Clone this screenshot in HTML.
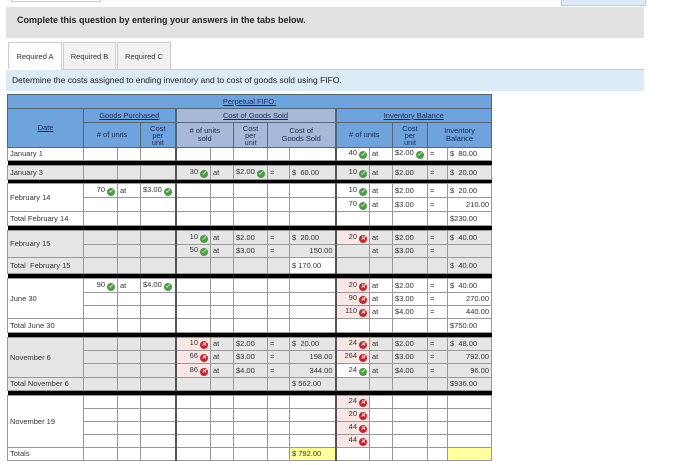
<!DOCTYPE html>
<html><head><meta charset="utf-8"><style>
body{margin:0;width:700px;height:465px;background:#fff;font-family:"Liberation Sans",Arial,sans-serif;position:relative;overflow:hidden}
.topl{position:absolute;left:11px;top:0;width:88px;height:1px;border:1px solid #ccc;border-top:0}
.topr{position:absolute;left:561px;top:0;width:83px;height:5px;background:#dbe9f7;border:1px solid #bcd;border-top:0}
.banner{position:absolute;left:6px;top:7px;width:638px;height:31px;background:#e2e2e2}
.banner b{position:absolute;left:11px;top:8px;font-size:9px;color:#222}
.tab{position:absolute;top:42px;height:27px;border:1px solid #ccc;border-bottom:0;background:#f2f2f2;font-size:7.5px;color:#333;text-align:center;line-height:27px;box-sizing:border-box}
.tab.a{background:#fff}
.tline{position:absolute;left:61px;top:69px;width:583px;height:1px;background:#ccc}
.instr{position:absolute;left:6px;top:70px;width:638px;height:21px;background:#dcebf8;font-size:8.5px;line-height:21px;color:#222}
.instr span{margin-left:6px}
table{position:absolute;left:7px;top:94px;border-collapse:collapse;table-layout:fixed;font-size:7.5px;color:#333}
td{border:1px solid #999;padding:0 2px;overflow:hidden;white-space:nowrap;line-height:8px}
.h td{background:#6fa3de;text-align:center;color:#1a2a4a;border-color:#567}
.h td.c{background:#a7b8d9}
.h u{color:#1a2a5a}
.g td{background:#e6e6e6}
.bar td{background:#000;border:0;padding:0;height:4px}
.r{text-align:right}
.ok,.no{display:inline-block;width:8px;height:8px;border-radius:50%;color:#fff;font-size:6px;line-height:8px;text-align:center;vertical-align:-1px;margin-left:2px;font-weight:bold}
.ok{background:#4e9a47}.no{background:#c4262e}
.pk{background:#fbe6e6!important}
.w{background:#fff!important}
.y{background:#ffff9e!important}
.bl{border-left:2px solid #555}
</style></head><body>
<div class="topl"></div><div class="topr"></div>
<div class="banner"><b>Complete this question by entering your answers in the tabs below.</b></div>
<div class="tab a" style="left:8px;width:54px">Required A</div>
<div class="tab" style="left:63px;width:53px">Required B</div>
<div class="tab" style="left:117px;width:54px">Required C</div>
<div class="tline"></div>
<div class="instr"><span>Determine the costs assigned to ending inventory and to cost of goods sold using FIFO.</span></div>
<table>
<colgroup><col style="width:76px"><col style="width:34px"><col style="width:23px"><col style="width:35px"><col style="width:35px"><col style="width:23px"><col style="width:34px"><col style="width:22px"><col style="width:46px"><col style="width:34px"><col style="width:23px"><col style="width:35px"><col style="width:20px"><col style="width:44px"></colgroup>
<tr class="h" style="height:14px"><td colspan="14"><u>Perpetual FIFO:</u></td></tr>
<tr class="h" style="height:14px"><td rowspan="2"><u>Date</u></td><td colspan="3"><u>Goods Purchased</u></td><td colspan="5" class="c bl"><u>Cost of Goods Sold</u></td><td colspan="5" class="bl"><u>Inventory Balance</u></td></tr>
<tr class="h" style="height:25px"><td colspan="2"># of units</td><td style="line-height:7px">Cost<br>per<br>unit</td><td colspan="2" class="c bl"># of units<br>sold</td><td class="c" style="line-height:7px">Cost<br>per<br>unit</td><td colspan="2" class="c">Cost of<br>Goods Sold</td><td colspan="2" class="bl"># of units</td><td style="line-height:7px">Cost<br>per<br>unit</td><td colspan="2">Inventory<br>Balance</td></tr>
<tr style="height:13px"><td>January 1</td><td></td><td></td><td></td><td class="bl"></td><td></td><td></td><td></td><td></td><td class="r bl">40<i class="ok">✓</i></td><td>at</td><td>$2.00<i class="ok">✓</i></td><td>=</td><td>$&nbsp;&nbsp;80.00</td></tr>
<tr class="bar"><td colspan="14"></td></tr>
<tr class="g" style="height:14px"><td>January 3</td><td></td><td></td><td></td><td class="r bl">30<i class="ok">✓</i></td><td>at</td><td>$2.00<i class="ok">✓</i></td><td>=</td><td>$&nbsp;&nbsp;60.00</td><td class="r bl">10<i class="ok">✓</i></td><td>at</td><td>$2.00</td><td>=</td><td>$&nbsp;&nbsp;20.00</td></tr>
<tr class="bar"><td colspan="14" style="height:3px"></td></tr>
<tr style="height:14px"><td rowspan="2">February 14</td><td class="r">70<i class="ok">✓</i></td><td>at</td><td>$3.00<i class="ok">✓</i></td><td class="bl"></td><td></td><td></td><td></td><td></td><td class="r bl">10<i class="ok">✓</i></td><td>at</td><td>$2.00</td><td>=</td><td>$&nbsp;&nbsp;20.00</td></tr>
<tr style="height:14px"><td></td><td></td><td></td><td class="bl"></td><td></td><td></td><td></td><td></td><td class="r bl">70<i class="ok">✓</i></td><td>at</td><td>$3.00</td><td>=</td><td class="r">210.00</td></tr>
<tr style="height:14px"><td>Total February 14</td><td></td><td></td><td></td><td class="bl"></td><td></td><td></td><td></td><td></td><td class="bl"></td><td></td><td></td><td></td><td>$230.00</td></tr>
<tr class="bar"><td colspan="14"></td></tr>
<tr class="g" style="height:14px"><td rowspan="2">February 15</td><td></td><td></td><td></td><td class="r bl">10<i class="ok">✓</i></td><td>at</td><td>$2.00</td><td>=</td><td>$&nbsp;&nbsp;20.00</td><td class="r bl pk">20<i class="no">✕</i></td><td>at</td><td>$2.00</td><td>=</td><td>$&nbsp;&nbsp;40.00</td></tr>
<tr class="g" style="height:13px"><td></td><td></td><td></td><td class="r bl">50<i class="ok">✓</i></td><td>at</td><td>$3.00</td><td>=</td><td class="r">150.00</td><td class="bl"></td><td>at</td><td>$3.00</td><td>=</td><td></td></tr>
<tr class="g" style="height:16px"><td style="white-space:normal;line-height:7px">Total&nbsp; February 15</td><td></td><td></td><td></td><td class="bl"></td><td></td><td></td><td></td><td class="w">$ 170.00</td><td class="bl"></td><td></td><td></td><td></td><td>$&nbsp;&nbsp;40.00</td></tr>
<tr class="bar"><td colspan="14"></td></tr>
<tr style="height:14px"><td rowspan="3">June 30</td><td class="r">90<i class="ok">✓</i></td><td>at</td><td>$4.00<i class="ok">✓</i></td><td class="bl"></td><td></td><td></td><td></td><td></td><td class="r bl pk">20<i class="no">✕</i></td><td>at</td><td>$2.00</td><td>=</td><td>$&nbsp;&nbsp;40.00</td></tr>
<tr style="height:13px"><td></td><td></td><td></td><td class="bl"></td><td></td><td></td><td></td><td></td><td class="r bl pk">90<i class="no">✕</i></td><td>at</td><td>$3.00</td><td>=</td><td class="r">270.00</td></tr>
<tr style="height:13px"><td></td><td></td><td></td><td class="bl"></td><td></td><td></td><td></td><td></td><td class="r bl pk">110<i class="no">✕</i></td><td>at</td><td>$4.00</td><td>=</td><td class="r">440.00</td></tr>
<tr style="height:14px"><td>Total June 30</td><td></td><td></td><td></td><td class="bl"></td><td></td><td></td><td></td><td></td><td class="bl"></td><td></td><td></td><td></td><td>$750.00</td></tr>
<tr class="bar"><td colspan="14"></td></tr>
<tr class="g" style="height:13px"><td rowspan="3">November 6</td><td></td><td></td><td></td><td class="r bl pk">10<i class="no">✕</i></td><td>at</td><td>$2.00</td><td>=</td><td>$&nbsp;&nbsp;20.00</td><td class="r bl pk">24<i class="no">✕</i></td><td>at</td><td>$2.00</td><td>=</td><td>$&nbsp;&nbsp;48.00</td></tr>
<tr class="g" style="height:13px"><td></td><td></td><td></td><td class="r bl pk">66<i class="no">✕</i></td><td>at</td><td>$3.00</td><td>=</td><td class="r">198.00</td><td class="r bl pk">264<i class="no">✕</i></td><td>at</td><td>$3.00</td><td>=</td><td class="r">792.00</td></tr>
<tr class="g" style="height:14px"><td></td><td></td><td></td><td class="r bl pk">86<i class="no">✕</i></td><td>at</td><td>$4.00</td><td>=</td><td class="r">344.00</td><td class="r bl w">24<i class="ok">✓</i></td><td>at</td><td>$4.00</td><td>=</td><td class="r">96.00</td></tr>
<tr class="g" style="height:13px"><td>Total November 6</td><td></td><td></td><td></td><td class="bl"></td><td></td><td></td><td></td><td>$ 562.00</td><td class="bl"></td><td></td><td></td><td></td><td>$936.00</td></tr>
<tr class="bar"><td colspan="14"></td></tr>
<tr style="height:13px"><td rowspan="4">November 19</td><td></td><td></td><td></td><td class="bl"></td><td></td><td></td><td></td><td></td><td class="r bl pk">24<i class="no">✕</i></td><td></td><td></td><td></td><td></td></tr>
<tr style="height:13px"><td></td><td></td><td></td><td class="bl"></td><td></td><td></td><td></td><td></td><td class="r bl pk">20<i class="no">✕</i></td><td></td><td></td><td></td><td></td></tr>
<tr style="height:13px"><td></td><td></td><td></td><td class="bl"></td><td></td><td></td><td></td><td></td><td class="r bl pk">44<i class="no">✕</i></td><td></td><td></td><td></td><td></td></tr>
<tr style="height:13px"><td></td><td></td><td></td><td class="bl"></td><td></td><td></td><td></td><td></td><td class="r bl pk">44<i class="no">✕</i></td><td></td><td></td><td></td><td></td></tr>
<tr style="height:13px"><td>Totals</td><td></td><td></td><td></td><td class="bl"></td><td></td><td></td><td></td><td class="y">$ 792.00</td><td class="bl"></td><td></td><td></td><td></td><td class="y"></td></tr>
</table>
</body></html>
